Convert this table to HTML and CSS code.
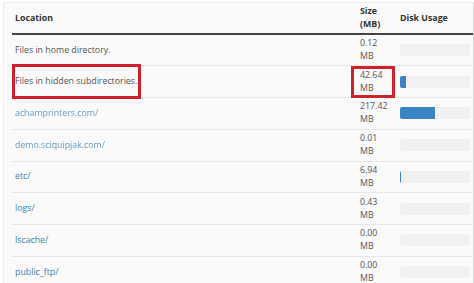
FILE: index.html
```html
<!DOCTYPE html>
<html>
<head>
<meta charset="utf-8">
<link rel="stylesheet" href="styles.css">
</head>
<body>
<div class="panel">
<table class="usage">
<thead>
<tr><th class="loc">Location</th><th class="size">Size<br>(MB)</th><th class="disk">Disk Usage</th></tr>
</thead>
<tbody>
<tr><td class="loc">Files in home directory.</td><td class="size">0.12<br>MB</td><td class="disk"><div class="bar"><div class="fill" style="width:0%"></div></div></td></tr>
<tr><td class="loc"><span class="mark mark-loc">Files in hidden subdirectories.</span></td><td class="size"><span class="mark mark-size">42.64<br>MB</span></td><td class="disk"><div class="bar"><div class="fill" style="width:9%"></div></div></td></tr>
<tr><td class="loc"><a class="blur">achamprinters.com/</a></td><td class="size">217.42<br>MB</td><td class="disk"><div class="bar"><div class="fill" style="width:50%"></div></div></td></tr>
<tr><td class="loc"><a class="blur">demo.sciquipjak.com/</a></td><td class="size">0.01<br>MB</td><td class="disk"><div class="bar"><div class="fill" style="width:0%"></div></div></td></tr>
<tr><td class="loc"><a>etc/</a></td><td class="size">6.94<br>MB</td><td class="disk"><div class="bar"><div class="fill" style="width:2%"></div></div></td></tr>
<tr><td class="loc"><a>logs/</a></td><td class="size">0.43<br>MB</td><td class="disk"><div class="bar"><div class="fill" style="width:0%"></div></div></td></tr>
<tr><td class="loc"><a>lscache/</a></td><td class="size">0.00<br>MB</td><td class="disk"><div class="bar"><div class="fill" style="width:0%"></div></div></td></tr>
<tr><td class="loc"><a>public_ftp/</a></td><td class="size">0.00<br>MB</td><td class="disk"><div class="bar"><div class="fill" style="width:0%"></div></div></td></tr>
</tbody>
</table>
</div>
</body>
</html>
```
FILE: styles.css
```css
html, body {
  margin: 0;
  padding: 0;
  background: #ffffff;
  font-family: "Open Sans", "Liberation Sans", sans-serif;
  overflow: hidden;
}
.panel {
  margin: 2px 0 0 3px;
  background: #fafafa;
  border: 1px solid #ececec;
  border-right-color: #d8d8d8;
  padding: 0 0 0 8px;
  height: 290px;
}
.usage {
  width: 100%;
  border-collapse: collapse;
  font-size: 8.8px;
  color: #555;
}
.usage th {
  text-align: left;
  font-weight: 700;
  color: #333;
  line-height: 13px;
  padding: 2px 3px 2px 3px;
  border-bottom: 2px solid #444;
  vertical-align: middle;
}
.usage td {
  line-height: 13px;
  padding: 2px 3px 2px 3px;
  border-top: 1px solid #e8e8e8;
  vertical-align: middle;
  box-sizing: border-box;
}
.usage tbody tr { height: 31.75px; }
.usage tbody tr:first-child td { border-top: none; }
.usage .size { width: 34px; padding-left: 5px; }
.usage .disk { width: 70px; padding-left: 3px; padding-right: 3px; }
.usage a { color: #3d82b8; text-decoration: none; }
.blur { filter: blur(0.7px); color: #6a9cc4 !important; }
.bar {
  height: 12px;
  background: #f1f1f1;
  border-radius: 2px;
  overflow: hidden;
}
.fill {
  height: 100%;
  background: #3b84c4;
}
.mark {
  display: inline-block;
  vertical-align: middle;
  outline: 3px solid #d0202e;
}
.mark-loc {
  margin: -8px 0;
  padding: 8px 1px 8px 0;
}
.mark-size {
  margin: 0 0 0 -6px;
  padding: 0 10px 0 6px;
}
```
